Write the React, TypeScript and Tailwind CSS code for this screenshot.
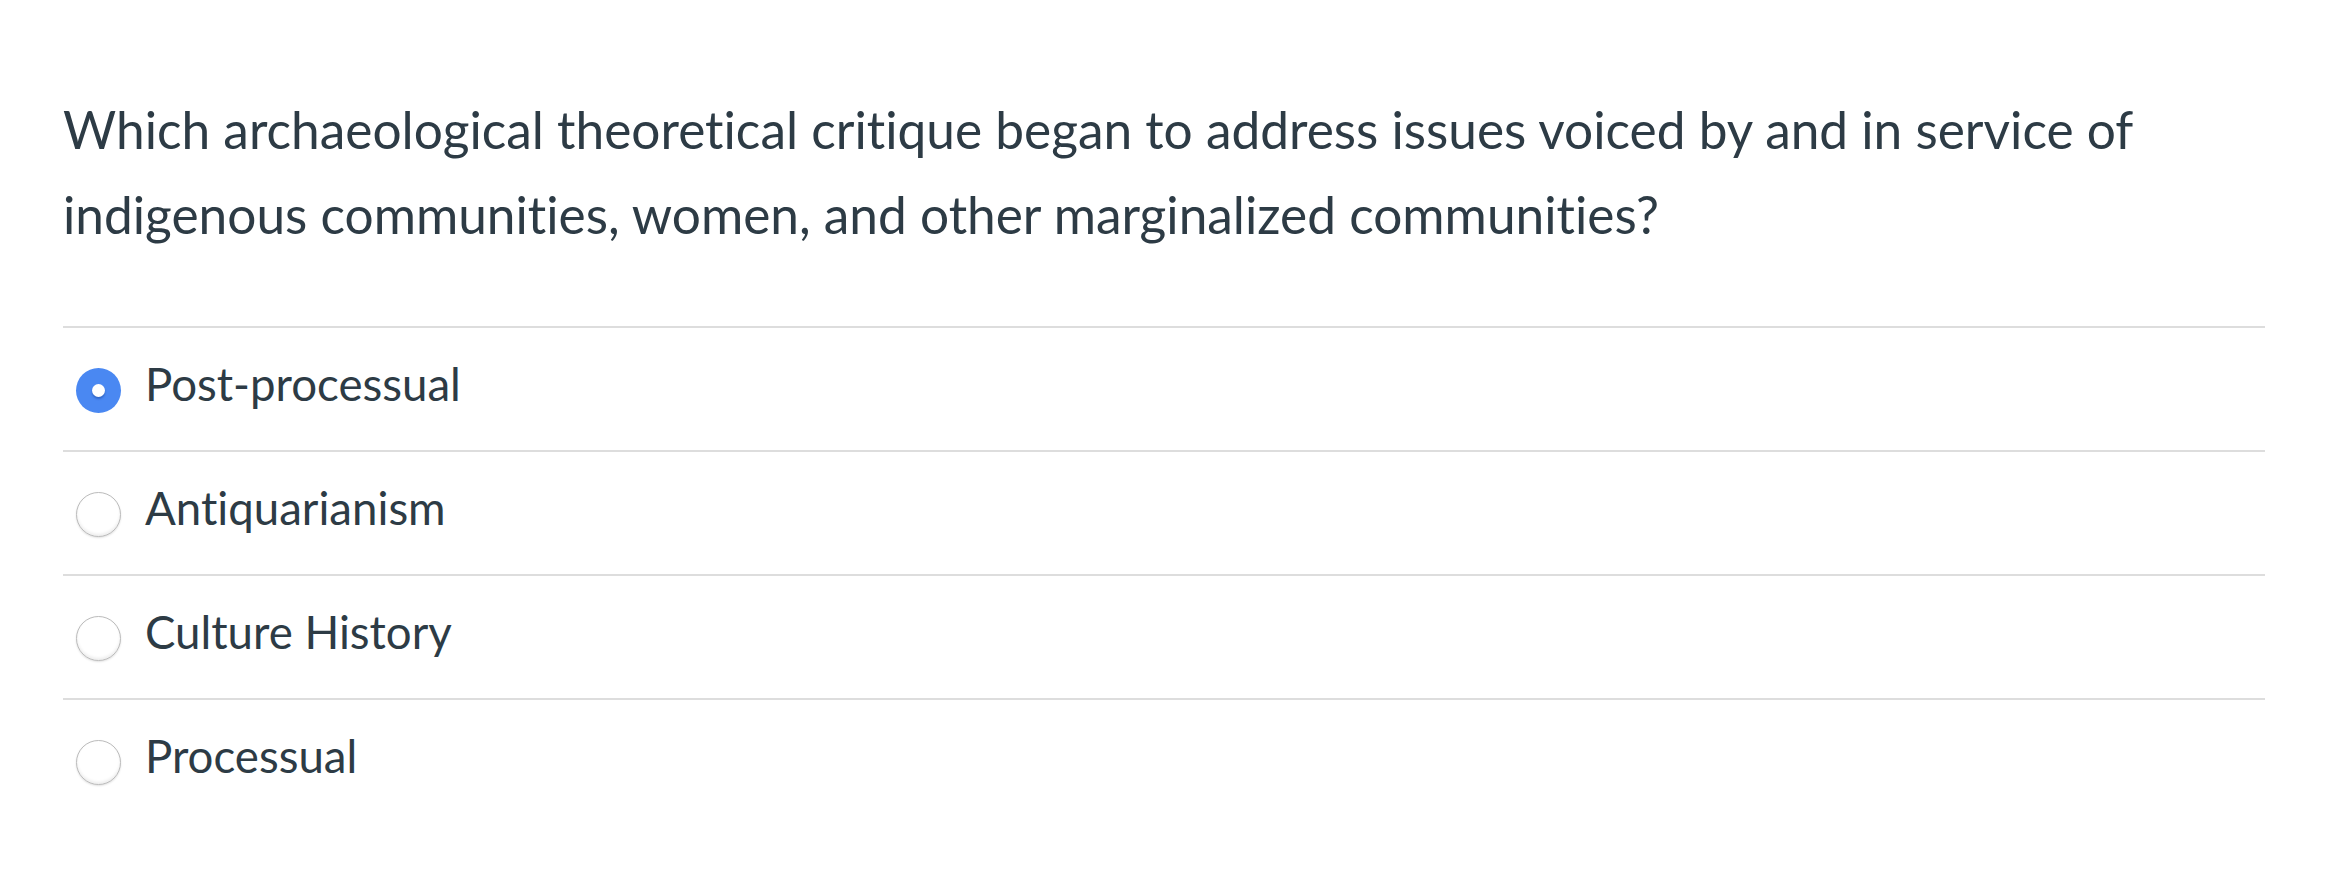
import React from 'react';

const options = [
  { label: 'Post-processual', checked: true },
  { label: 'Antiquarianism', checked: false },
  { label: 'Culture History', checked: false },
  { label: 'Processual', checked: false },
];

function Radio({ checked }: { checked: boolean }) {
  if (checked) {
    return (
      <span className="flex h-[45px] w-[45px] shrink-0 items-center justify-center rounded-full bg-[#4a88f2]">
        <span className="block h-[13px] w-[13px] rounded-full bg-white shadow-[0_2px_2px_rgba(0,40,120,0.35)]" />
      </span>
    );
  }
  return (
    <span className="block h-[45px] w-[45px] shrink-0 rounded-full border-[1.5px] border-[#bcbcbc] bg-white shadow-[inset_0_-2px_3px_rgba(0,0,0,0.07),0_1px_2px_rgba(0,0,0,0.12)]" />
  );
}

export default function App() {
  return (
    <div
      className="min-h-screen bg-white pl-[63px] pr-[61px] pt-[87px] text-[#2d3b45] [font-variant-ligatures:none]"
      style={{ fontFamily: 'Lato, "Open Sans", sans-serif' }}
    >
      <p className="text-[51.4px] leading-[85px]">
        Which archaeological theoretical critique began to address issues voiced by and in service of
        <br />
        indigenous communities, women, and other marginalized communities?
      </p>

      <div className="mt-[69px]">
        {options.map((opt) => (
          <div key={opt.label} className="flex h-[124px] items-center border-t-2 border-[#dddddd]">
            <div className="ml-[13px] mt-[3px]">
              <Radio checked={opt.checked} />
            </div>
            <span className="mb-[11px] ml-[24px] text-[45.6px] leading-[54px]">{opt.label}</span>
          </div>
        ))}
      </div>
    </div>
  );
}
